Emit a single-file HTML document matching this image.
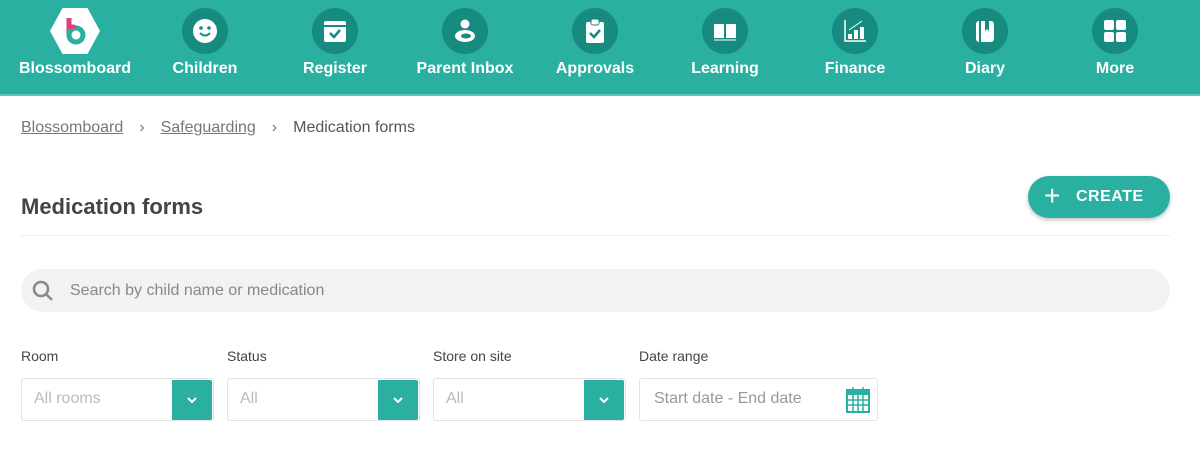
<!DOCTYPE html><html><head><style>
body{margin:0;width:1200px;height:458px;background:#fff;font-family:"Liberation Sans",sans-serif;overflow:hidden;position:relative}
.nav{position:absolute;left:0;top:0;width:1200px;height:96px;background:#2ab0a0;border-bottom:2px solid #5cc7ba;box-sizing:border-box}
.it{position:absolute;top:8px;width:130px;text-align:center;color:#fff;font-weight:bold;font-size:16px}
.ic{width:46px;height:46px;border-radius:50%;background:#178b7f;margin:0 auto 6px;display:flex;align-items:center;justify-content:center}
.ab{position:absolute}
.lbl{position:absolute;top:348px;font-size:14px;color:#444}
.sel{position:absolute;top:378px;width:193px;height:43px;border:1px solid #e2e2e2;border-radius:3px;box-sizing:border-box;color:#bbb;font-size:16px;padding:11px 12px}
.sel .b{position:absolute;right:1px;top:1px;width:40px;height:40px;background:#2ab0a0;border-radius:0 2px 2px 0;display:flex;align-items:center;justify-content:center}
</style></head><body>
<div class="nav">
<div class="it" style="left:10px"><div class="ic" style="background:#fff;width:50px;height:46px;border-radius:0;clip-path:polygon(25% 0,75% 0,100% 50%,75% 100%,25% 100%,0 50%)"><svg width="26" height="30"><path d="M7 2v18" stroke="#e0407a" stroke-width="5"/><circle cx="14" cy="19" r="7" stroke="#2ab0a0" stroke-width="5" fill="none"/><path d="M7 12q3-3 7 0" stroke="#e0407a" stroke-width="4" fill="none"/></svg></div>Blossomboard</div>
<div class="it" style="left:140px"><div class="ic"><svg width="26" height="26"><circle cx="13" cy="13" r="12" fill="#fff"/><circle cx="9" cy="10" r="1.8" fill="#178b7f"/><circle cx="17" cy="10" r="1.8" fill="#178b7f"/><path d="M8 15q5 5 10 0" stroke="#178b7f" stroke-width="2" fill="none"/></svg></div>Children</div>
<div class="it" style="left:270px"><div class="ic"><svg width="26" height="26"><rect x="2" y="3" width="22" height="21" rx="2" fill="#fff"/><rect x="2" y="7" width="22" height="2" fill="#178b7f"/><path d="M8 15l4 4 6-7" stroke="#178b7f" stroke-width="2.5" fill="none"/></svg></div>Register</div>
<div class="it" style="left:400px"><div class="ic"><svg width="26" height="26"><circle cx="13" cy="6" r="4.5" fill="#fff"/><ellipse cx="13" cy="18" rx="10" ry="6" fill="#fff"/><ellipse cx="14" cy="18" rx="5" ry="2.5" fill="#178b7f"/></svg></div>Parent Inbox</div>
<div class="it" style="left:530px"><div class="ic"><svg width="26" height="26"><rect x="4" y="4" width="18" height="21" rx="2" fill="#fff"/><rect x="9" y="1" width="8" height="6" rx="2" fill="#fff" stroke="#178b7f"/><path d="M8 15l4 4 6-7" stroke="#178b7f" stroke-width="2.5" fill="none"/></svg></div>Approvals</div>
<div class="it" style="left:660px"><div class="ic"><svg width="26" height="26"><path d="M2 6h10v14H2zM14 6h10v14H14z" fill="#fff"/><path d="M2 22h22" stroke="#fff"/></svg></div>Learning</div>
<div class="it" style="left:790px"><div class="ic"><svg width="26" height="26"><path d="M3 2v21h21" stroke="#fff" stroke-width="1.5" fill="none"/><rect x="6" y="16" width="4" height="5" fill="#fff"/><rect x="12" y="12" width="4" height="9" fill="#fff"/><rect x="18" y="9" width="4" height="12" fill="#fff"/><path d="M7 12l13-9" stroke="#fff"/></svg></div>Finance</div>
<div class="it" style="left:920px"><div class="ic"><svg width="26" height="26"><rect x="4" y="3" width="18" height="21" rx="3" fill="#fff"/><path d="M8 3v21" stroke="#178b7f" stroke-width="2"/><path d="M13 3v10l2-2 2 2V3" fill="#178b7f"/></svg></div>Diary</div>
<div class="it" style="left:1050px"><div class="ic"><svg width="26" height="26" fill="#fff"><rect x="2" y="2" width="10" height="10" rx="2"/><rect x="14" y="2" width="10" height="10" rx="2"/><rect x="2" y="14" width="10" height="10" rx="2"/><rect x="14" y="14" width="10" height="10" rx="2"/></svg></div>More</div>
</div>
<div class="ab" style="left:21px;top:119px;font-size:16px;color:#777"><span style="text-decoration:underline">Blossomboard</span><span style="margin:0 16px">›</span><span style="text-decoration:underline">Safeguarding</span><span style="margin:0 16px">›</span><span style="color:#555">Medication forms</span></div>
<div class="ab" style="left:21px;top:194px;font-size:22px;color:#444;font-weight:bold">Medication forms</div>
<div class="ab" style="left:21px;top:235px;width:1149px;border-top:1px solid #eee"></div>
<div class="ab" style="left:1028px;top:176px;width:142px;height:42px;border-radius:21px;background:#2ab0a0;box-shadow:0 2px 4px rgba(0,0,0,.25);color:#fff;font-weight:bold;font-size:16px;line-height:42px;letter-spacing:.5px"><span style="font-size:28px;position:absolute;left:16px;top:-1px;font-weight:normal">+</span><span style="position:absolute;left:48px">CREATE</span></div>
<div class="ab" style="left:21px;top:269px;width:1149px;height:43px;border-radius:22px;background:#f2f2f2"></div>
<svg class="ab" style="left:32px;top:280px" width="22" height="22"><circle cx="9" cy="9" r="7" stroke="#888" stroke-width="2.5" fill="none"/><path d="M14 14l6 6" stroke="#888" stroke-width="2.5"/></svg>
<div class="ab" style="left:70px;top:282px;font-size:16px;color:#888">Search by child name or medication</div>
<div class="lbl" style="left:21px">Room</div><div class="lbl" style="left:227px">Status</div><div class="lbl" style="left:433px">Store on site</div><div class="lbl" style="left:639px">Date range</div>
<div class="sel" style="left:21px">All rooms<div class="b"><svg width="12" height="8"><path d="M2 2l4 4 4-4" stroke="#fff" stroke-width="2" fill="none"/></svg></div></div>
<div class="sel" style="left:227px">All<div class="b"><svg width="12" height="8"><path d="M2 2l4 4 4-4" stroke="#fff" stroke-width="2" fill="none"/></svg></div></div>
<div class="sel" style="left:433px">All<div class="b"><svg width="12" height="8"><path d="M2 2l4 4 4-4" stroke="#fff" stroke-width="2" fill="none"/></svg></div></div>
<div class="sel" style="left:639px;width:239px;color:#999;padding-left:14px">Start date - End date
<svg style="position:absolute;right:6px;top:7px" width="26" height="28"><rect x="2" y="4" width="22" height="22" stroke="#2ab0a0" stroke-width="2" fill="none"/><rect x="2" y="4" width="22" height="5" fill="#2ab0a0"/><path d="M2 14h22M2 19h22M8 9v17M13 9v17M18 9v17M8 1v6M18 1v6" stroke="#2ab0a0" stroke-width="1.5"/></svg></div>
</body></html>
